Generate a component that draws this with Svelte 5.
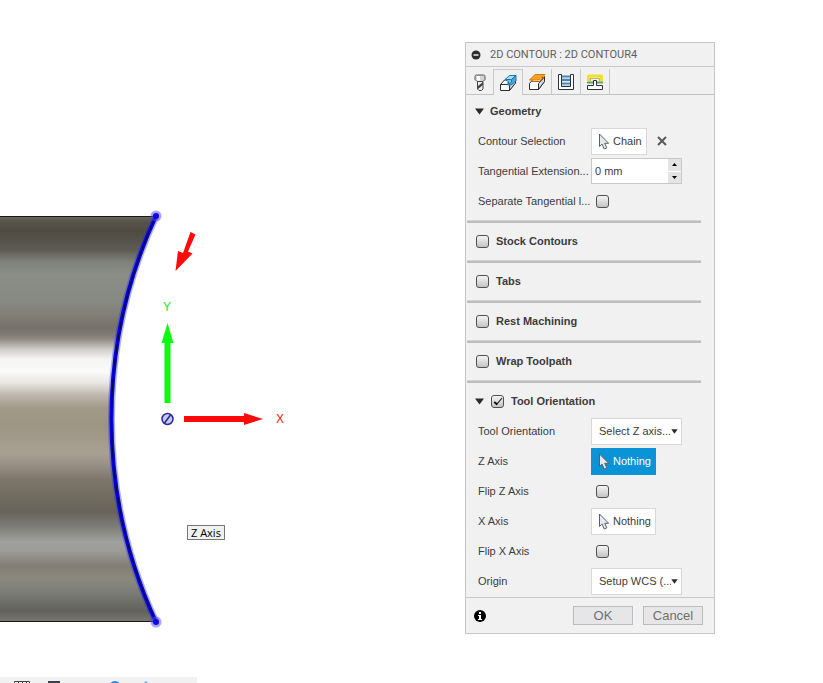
<script>
	let extension = $state('0 mm');
	let activeTab = $state('geometry');
	let zMode = $state('Select Z axis...');
	let origin = $state('Setup WCS (...');
	let separate = $state(false);
	let flipZ = $state(false);
	let flipX = $state(false);
	let toolOrientation = $state(true);

	const tabs = ['tool', 'geometry', 'heights', 'passes', 'linking'];

	let groups = $state([
		{ name: 'Stock Contours', on: false },
		{ name: 'Tabs', on: false },
		{ name: 'Rest Machining', on: false },
		{ name: 'Wrap Toolpath', on: false }
	]);

	// reflections on the cylinder: [y, color]
	const bands = [
		[216, '#6a685e'], [222, '#56534a'], [232, '#504c44'], [250, '#5d5b53'],
		[262, '#80827b'], [275, '#8b8e87'], [300, '#878a82'], [315, '#817e75'],
		[328, '#76706a'], [338, '#88837c'], [350, '#d3d1cd'], [359, '#f4f4f3'],
		[372, '#fafaf9'], [383, '#e7e5e2'], [395, '#beb8ae'], [408, '#a29988'],
		[425, '#9c9584'], [453, '#a8a193'], [465, '#989085'], [480, '#7d756a'],
		[495, '#716d60'], [512, '#67645a'], [525, '#7a7a74'], [542, '#a0a09d'],
		[551, '#9b9b97'], [566, '#827e74'], [578, '#8b887d'], [590, '#7e8079'],
		[611, '#62615b'], [622, '#7a786f']
	];

	function step(by) {
		extension = `${(parseFloat(extension) || 0) + by} mm`;
	}
</script>

{#snippet cursor()}
	<svg class="cursor" width="12" height="17" viewBox="0 0 12 17">
		<path d="M1.500 1v12.500l2.600-2.400 2.100 4.900 2.600-1.100-2.100-4.600h4z" fill="#e4eaf0" stroke="#5b6067" />
	</svg>
{/snippet}

{#snippet arrow()}
	<svg width="9" height="7" viewBox="0 0 9 7"><path d="M0 0.500h9L4.500 6.500z" fill="#2b2b2b" /></svg>
{/snippet}

{#snippet tabIcon(name)}
	<svg width="20" height="20" viewBox="0 0 20 20" stroke-linejoin="round">
		{#if name === 'tool'}
			<path d="M5 4.500q0-1.500 1.500-1.500h7q1.500 0 1.500 1.500v3l-2 2H7l-2-2z" fill="#d4d4d4" stroke="#555" />
			<path d="M7 4h3v4.500H7.500L7 7z" fill="#fff" />
			<path d="M7.500 9.500h5.500v7.500l-1.500 1.500h-2.500l-1.500-1.500z" fill="#eee" stroke="#444" />
			<path d="M8 14l5-4v3l-5 4z" fill="#444" />
		{:else if name === 'geometry'}
			<path d="M2.500 11.500l4-4.500h4.500l6.500-3v5.500l-6 8h-9z" fill="#fff" stroke="#2b3038" />
			<path d="M11.500 11.500v6l6-7.500V6z" fill="#d3d6d9" stroke="#2b3038" />
			<path d="M2.500 11.500h9" stroke="#2b3038" />
			<path d="M7 6.500l4.500-4h6.500l-4.500 4z" fill="#a5dcf7" stroke="#1879a9" />
			<path d="M13.500 6.500l4.500-4v5l-4.500 4.500h-3.500V9l3.500-.500z" fill="#4aa9dc" stroke="#1879a9" />
			<path d="M7 6.500h6.500v2.500l-3 2.500V8.500z" fill="#7cc6ec" stroke="#1879a9" />
		{:else if name === 'heights'}
			<path d="M2.500 11.500l5-6h10v4l-6 8h-9z" fill="#fff" stroke="#2b3038" />
			<path d="M11.500 11.500v6l6-8V5z" fill="#d5d7d8" stroke="#2b3038" />
			<path d="M2.500 8L8 2.500h10L12.500 8z" fill="#f7a223" stroke="#d17b10" />
			<path d="M4 9.500h8.500L18 4" fill="none" stroke="#b8630b" />
		{:else if name === 'passes'}
			<path d="M2.500 2.500h3v12h9v-12h3v15h-15z" fill="#fff" stroke="#2b3343" />
			<path d="M6 4.500h8M6 8h8M6 11.500h8" stroke="#4c86ad" stroke-width="2" />
			<path d="M6 6.500h8M6 10h8M6 13.500h8" stroke="#b9d8ea" />
		{:else}
			<path d="M3.500 9V4h13v5" fill="none" stroke="#efe02c" stroke-width="3" />
			<path d="M5.500 9V6.500h9V9" fill="none" stroke="#c5b15c" />
			<path d="M2 10.500h16" stroke="#5aa55c" stroke-width="2" />
			<path d="M8.500 8.500h3v5h6v4h-15v-4h6z" fill="#fff" stroke="#2b3343" stroke-linejoin="miter" />
		{/if}
	</svg>
{/snippet}

<main class="workspace">
	<svg class="scene" width="300" height="640" viewBox="0 0 300 640">
		<defs>
			<linearGradient id="metal" gradientUnits="userSpaceOnUse" x1="0" y1="216" x2="0" y2="622">
				{#each bands as [y, color]}
					<stop offset={(y - 216) / 406} stop-color={color} />
				{/each}
			</linearGradient>
		</defs>

		<path d="M0 216H156A485 485 0 0 0 156 622H0z" fill="url(#metal)" />
		<path d="M0 216.500H156M0 621.500H156" stroke="#191917" />
		<g fill="none" stroke="#2a22e8">
			<path d="M156 216A485 485 0 0 0 156 622" stroke-width="7" opacity="0.35" />
			<path d="M156 216A485 485 0 0 0 156 622" stroke="#0606df" stroke-width="4" />
			<path d="M155 218A485 485 0 0 0 155 620" stroke="#05053c" stroke-width="1" />
		</g>
		{#each [216, 622] as cy}
			<circle cx="156" {cy} r="5.500" fill="#5548ee" opacity="0.5" />
			<circle cx="156" {cy} r="3" fill="#0b08e0" />
		{/each}

		<path d="M190.500 232l5 2.500-7.500 17 4.500 2-17 17.500 2.500-20 5 2z" fill="#fe0a0a" />
		<path d="M167.500 323l6 20h-3v60h-6v-60h-3z" fill="#0dfd0d" />
		<path d="M184 416h60v-3l19 6-19 6v-3h-60z" fill="#fe0a0a" />
		<circle cx="167.500" cy="419" r="5.500" fill="#c9c9f5" stroke="#2b2b94" stroke-width="1.500" />
		<path d="M164.500 423l6-8" stroke="#2b2b94" stroke-width="1.500" />
		<text x="167" y="311" fill="#15e815">Y</text>
		<text x="280" y="423" fill="#f01818">X</text>
	</svg>

	<div class="tooltip">Z Axis</div>

	<nav class="navbar">
		<svg width="197" height="20" viewBox="0 0 197 20">
			<path d="M14.500 20V4.500h15V20M18.500 5v3M22.500 5v3M26.500 5v3" fill="none" stroke="#444" />
			<path d="M48 4h12v3H48z" fill="#3c3f4c" />
			<circle cx="115" cy="10" r="6" fill="#3584dc" />
			<path d="M146 4l5 5h-10z" fill="#62abe0" />
		</svg>
	</nav>

	<section class="dialog">
		<header>
			<svg width="10" height="10" viewBox="0 0 10 10">
				<circle cx="5" cy="5" r="4.500" fill="#2d2d2d" />
				<path d="M2.500 5h5" stroke="#eee" stroke-width="1.500" />
			</svg>
			2D CONTOUR : 2D CONTOUR4
		</header>

		<div class="tabs">
			{#each tabs as tab}
				<button class:active={activeTab === tab} aria-label={tab} onclick={() => (activeTab = tab)}>
					{@render tabIcon(tab)}
				</button>
			{/each}
		</div>

		<div class="body">
			<div class="row title">
				{@render arrow()}
				<span>Geometry</span>
			</div>
			<div class="row">
				<span class="label">Contour Selection</span>
				<button class="pick">{@render cursor()}Chain</button>
				<button class="clear" aria-label="Clear selection">
					<svg width="10" height="10" viewBox="0 0 10 10">
						<path d="M1 1l8 8M9 1l-8 8" stroke="#5a5a5a" stroke-width="2" />
					</svg>
				</button>
			</div>
			<div class="row">
				<label class="label" for="extension">Tangential Extension...</label>
				<div class="spinner">
					<input id="extension" type="text" bind:value={extension} />
					<div class="steps">
						<button aria-label="Increase" onclick={() => step(1)}>
							<svg width="5" height="3" viewBox="0 0 5 3"><path d="M0 3h5L2.500 0z" /></svg>
						</button>
						<button aria-label="Decrease" onclick={() => step(-1)}>
							<svg width="5" height="3" viewBox="0 0 5 3"><path d="M0 0h5L2.500 3z" /></svg>
						</button>
					</div>
				</div>
			</div>
			<div class="row">
				<label class="label" for="separate">Separate Tangential l...</label>
				<input id="separate" class="check" type="checkbox" bind:checked={separate} />
			</div>

			{#each groups as group}
				<hr />
				<label class="row title">
					<input type="checkbox" bind:checked={group.on} />
					<span>{group.name}</span>
				</label>
			{/each}

			<hr />
			<label class="row title">
				{@render arrow()}
				<input type="checkbox" bind:checked={toolOrientation} />
				<span>Tool Orientation</span>
			</label>
			<div class="row">
				<label class="label" for="orientation">Tool Orientation</label>
				<div class="select">
					<select id="orientation" bind:value={zMode}>
						<option>Select Z axis...</option>
					</select>
					{@render arrow()}
				</div>
			</div>
			<div class="row">
				<span class="label">Z Axis</span>
				<button class="pick current">{@render cursor()}Nothing</button>
			</div>
			<div class="row">
				<label class="label" for="flip-z">Flip Z Axis</label>
				<input id="flip-z" class="check" type="checkbox" bind:checked={flipZ} />
			</div>
			<div class="row">
				<span class="label">X Axis</span>
				<button class="pick">{@render cursor()}Nothing</button>
			</div>
			<div class="row">
				<label class="label" for="flip-x">Flip X Axis</label>
				<input id="flip-x" class="check" type="checkbox" bind:checked={flipX} />
			</div>
			<div class="row">
				<label class="label" for="origin">Origin</label>
				<div class="select">
					<select id="origin" bind:value={origin}>
						<option>Setup WCS (...</option>
					</select>
					{@render arrow()}
				</div>
			</div>
		</div>

		<footer>
			<svg width="12" height="12" viewBox="0 0 12 12">
				<circle cx="6" cy="6" r="6" fill="#000" />
				<path d="M5 2h2v2H5zM4 5h3v4h1v1H4V9h1V6H4z" fill="#fff" />
			</svg>
			<button>OK</button>
			<button>Cancel</button>
		</footer>
	</section>
</main>

<style>
	:global(body) {
		background: #fff;
	}

	.workspace {
		position: relative;
		height: 100vh;
		overflow: hidden;
		font: 11px/14px 'Liberation Sans', Arial, sans-serif;
		color: #3c3c3c;
	}

	svg {
		display: block;
		flex-shrink: 0;
	}

	button,
	input,
	select {
		font: inherit;
		color: inherit;
		margin: 0;
		padding: 0;
		border-radius: 0;
		box-sizing: border-box;
	}

	.scene {
		position: absolute;
		top: 0;
		left: 0;
	}

	.scene text {
		font-size: 12px;
		text-anchor: middle;
	}

	.tooltip {
		position: absolute;
		top: 525px;
		left: 187px;
		padding: 0 3px;
		border: 1px solid #767676;
		background: #f1f1f1;
		color: #000;
		line-height: 13px;
		font-family: 'Open Sans', sans-serif;
	}

	.navbar {
		position: absolute;
		bottom: -14px;
		left: 0;
		background: #f1f1f1;
	}

	.dialog {
		position: absolute;
		top: 42px;
		left: 465px;
		width: 248px;
		border: 1px solid #c6c6c6;
		background: #f1f1f1;
	}

	header {
		display: flex;
		align-items: center;
		gap: 9px;
		height: 23px;
		padding-left: 5px;
		border-bottom: 1px solid #c9c9c9;
		font-family: Roboto, sans-serif;
		color: #606060;
	}

	.tabs {
		display: flex;
		height: 28px;
		padding-top: 2px;
		box-sizing: border-box;
		box-shadow: inset 0 -1px #c2c2c2;
	}

	.tabs button {
		display: flex;
		align-items: center;
		justify-content: center;
		width: 29px;
		border: 0;
		border-right: 1px solid #c9c9c9;
		background: none;
	}

	.tabs button:first-child {
		width: 28px;
	}

	.tabs .active {
		border-top: 1px solid #c9c9c9;
		background: #f1f1f1;
	}

	.body {
		padding: 1px 0;
	}

	.row {
		display: flex;
		align-items: center;
		height: 30px;
		padding-left: 12px;
	}

	.title {
		gap: 6px;
		padding-left: 9px;
		font-weight: bold;
	}

	.title input {
		margin: 0 1px;
	}

	.label {
		width: 113px;
		white-space: nowrap;
	}

	hr {
		height: 2px;
		margin: 4px 13px 3px 1px;
		border: 0;
		border-top: 1px solid #d2d2d2;
		background: #bdbdbd;
	}

	input[type='checkbox'] {
		appearance: none;
		width: 13px;
		height: 13px;
		border: 1px solid #505050;
		border-radius: 3px;
		background: linear-gradient(#f5f5f5, #c3c3c3);
	}

	input[type='checkbox']:checked::after {
		content: '';
		display: block;
		width: 3px;
		height: 7px;
		margin: 0 0 0 4px;
		border: solid #111;
		border-width: 0 1px 2px 0;
		transform: rotate(40deg);
	}

	.row .check {
		margin-left: 5px;
	}

	.pick {
		display: flex;
		align-items: center;
		gap: 3px;
		height: 27px;
		padding: 0 4px 0 6px;
		border: 1px solid #d8d8d8;
		background: #fff;
	}

	.pick.current {
		border-color: #0b93d8;
		background: #0b93d8;
		color: #fff;
	}

	.clear {
		margin-left: 10px;
		border: 0;
		background: none;
	}

	.spinner {
		display: flex;
		width: 91px;
		height: 26px;
		border: 1px solid #c8c8c8;
		box-sizing: border-box;
		background: #fff;
	}

	.spinner input {
		flex: 1;
		min-width: 0;
		padding-left: 3px;
		border: 0;
		background: none;
	}

	.steps {
		display: grid;
		grid-template-rows: 1fr 1fr;
		gap: 1px;
		width: 13px;
	}

	.steps button {
		display: grid;
		place-items: center;
		border: 0;
		background: #e4e4e4;
	}

	.select {
		position: relative;
	}

	.select select {
		display: block;
		appearance: none;
		width: 91px;
		height: 27px;
		padding: 0 10px 0 7px;
		border: 1px solid #d8d8d8;
		background: #fff;
	}

	.select svg {
		position: absolute;
		top: 11px;
		right: 4px;
		width: 7px;
		height: 5px;
		pointer-events: none;
	}

	footer {
		display: flex;
		align-items: center;
		gap: 10px;
		height: 35px;
		padding: 0 11px 0 8px;
		border-top: 1px solid #c9c9c9;
	}

	footer svg {
		margin-right: auto;
	}

	footer button {
		width: 60px;
		height: 19px;
		border: 1px solid #bcbcbc;
		background: #e6e6e8;
		font-size: 13px;
		line-height: 17px;
		color: #707070;
	}
</style>
